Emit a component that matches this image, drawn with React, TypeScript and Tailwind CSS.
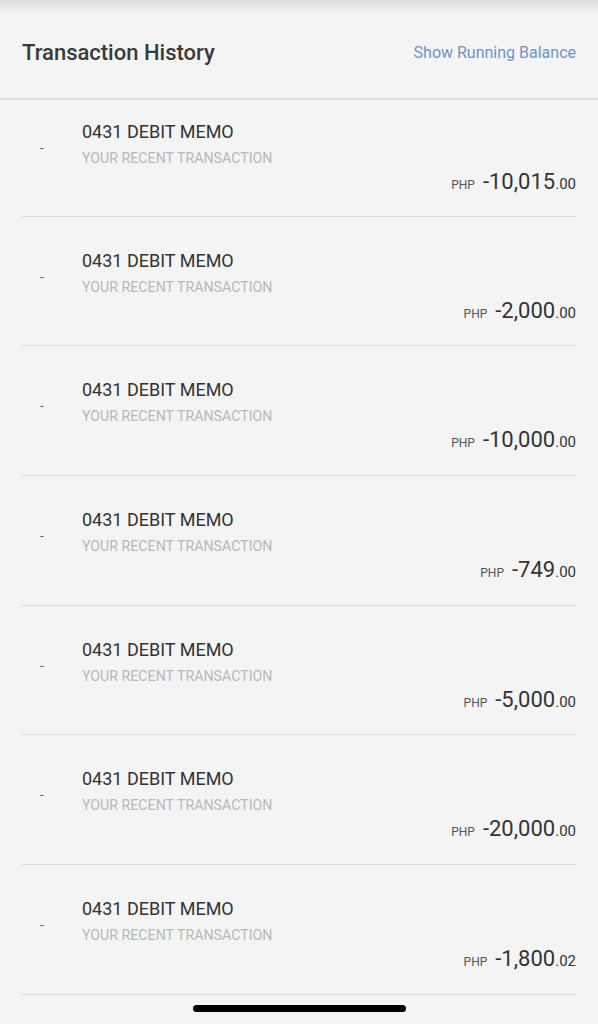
import React from "react";

const rows = [
  { int: "-10,015", dec: "00" },
  { int: "-2,000", dec: "00" },
  { int: "-10,000", dec: "00" },
  { int: "-749", dec: "00" },
  { int: "-5,000", dec: "00" },
  { int: "-20,000", dec: "00" },
  { int: "-1,800", dec: "02" },
];

export default function App() {
  return (
    <div
      className="w-[598px] h-[1024px] bg-[#f4f4f4] overflow-hidden relative"
      style={{ fontFamily: "Roboto, 'Noto Sans', sans-serif" }}
    >
      <div className="h-[14px] bg-gradient-to-b from-[#dedede] to-[#f4f4f4]" />
      <div className="h-[86px] flex items-center justify-between px-[22px] border-b-2 border-[#dcdcdc]">
        <div className="text-[22px] font-medium text-[#3a3a3a] mt-[-7px]">
          Transaction History
        </div>
        <div className="text-[16px] text-[#6f93c6] mt-[-7px]">Show Running Balance</div>
      </div>
      {rows.map((r, i) => (
        <div
          key={i}
          className={
            i === 0
              ? "mx-[22px] border-b border-[#d9d9d9] h-[116.5px] flex pt-[20px]"
              : "mx-[22px] border-b border-[#d9d9d9] h-[129.7px] flex pt-[32px]"
          }
        >
          <div className="w-[60px] pl-[18px] pt-[20px] text-[13px] text-[#555] leading-[16px]">-</div>
          <div className="flex-1 flex flex-col">
            <div className="text-[18px] leading-[24px] text-[#333]">0431 DEBIT MEMO</div>
            <div className="text-[14.2px] leading-[20px] text-[#b8b8b8] mt-[4px]">
              YOUR RECENT TRANSACTION
            </div>
            <div className="flex items-baseline justify-end leading-[28px] text-[#333]">
              <span className="text-[12px] text-[#555] mr-[8px]">PHP</span>
              <span className="text-[22px]">{r.int}</span>
              <span className="text-[15px]">.{r.dec}</span>
            </div>
          </div>
        </div>
      ))}
      <div className="absolute left-[193px] top-[1005px] w-[213px] h-[7px] rounded-full bg-black" />
    </div>
  );
}
